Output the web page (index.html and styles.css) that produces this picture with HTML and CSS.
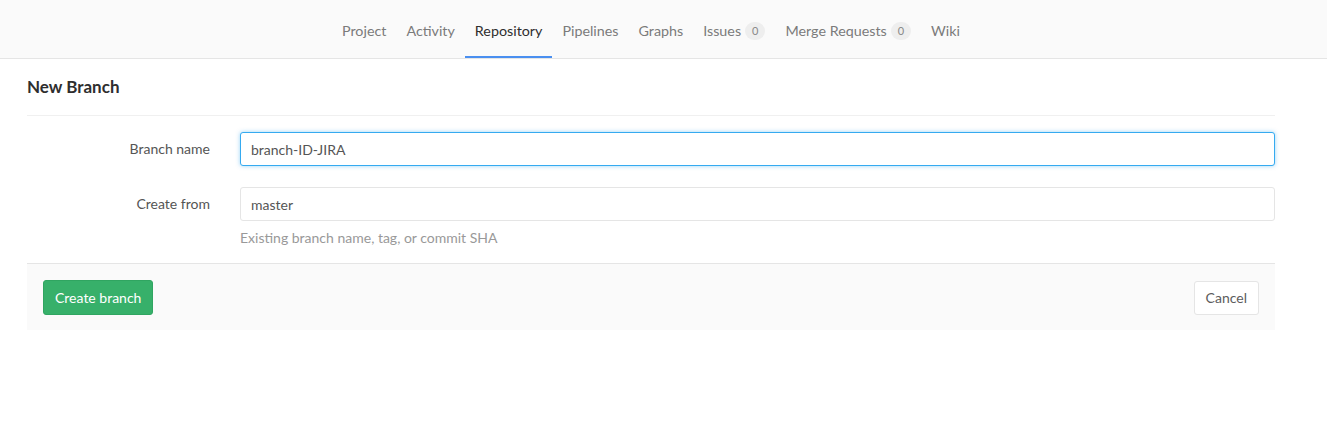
FILE: index.html
```html
<!DOCTYPE html>
<html>
<head>
<meta charset="utf-8">
<link rel="stylesheet" href="styles.css">
</head>
<body>
<nav class="nav">
  <ul class="tabs">
    <li class="tab">Project</li>
    <li class="tab">Activity</li>
    <li class="tab active">Repository</li>
    <li class="tab">Pipelines</li>
    <li class="tab">Graphs</li>
    <li class="tab">Issues <span class="badge">0</span></li>
    <li class="tab">Merge Requests <span class="badge">0</span></li>
    <li class="tab">Wiki</li>
  </ul>
</nav>
<main class="page">
  <h3 class="title">New Branch</h3>
  <form class="form">
    <div class="row">
      <label class="label">Branch name</label>
      <div class="field"><input class="input focus" type="text" value="branch-ID-JIRA"></div>
    </div>
    <div class="row row-last">
      <label class="label">Create from</label>
      <div class="field">
        <input class="input" type="text" value="master">
        <div class="help">Existing branch name, tag, or commit SHA</div>
      </div>
    </div>
    <div class="actions">
      <button type="button" class="btn btn-create">Create branch</button>
      <button type="button" class="btn btn-cancel">Cancel</button>
    </div>
  </form>
</main>
</body>
</html>
```
FILE: styles.css
```css
* { box-sizing: border-box; }
body {
  margin: 0;
  font-family: Lato, "Open Sans", "Liberation Sans", sans-serif;
  font-size: 14px;
  color: #2e2e2e;
  background: #fff;
}
.nav {
  background: #fafafa;
  border-bottom: 1px solid #e5e5e5;
  height: 59px;
  display: flex;
  justify-content: center;
  padding-right: 25px;
}
.tabs {
  list-style: none;
  margin: 0;
  padding: 0;
  display: flex;
}
.tab {
  padding: 21px 10px 15px;
  line-height: 20px;
  font-size: 14.3px;
  color: #7b7b7b;
  border-bottom: 2px solid transparent;
  display: flex;
  align-items: center;
  white-space: nowrap;
}
.tab.active {
  color: #2e2e2e;
  border-bottom-color: #4a8ff0;
}
.badge {
  display: inline-block;
  margin-left: 4px;
  background: #eee;
  color: #888;
  font-size: 11px;
  line-height: 18px;
  height: 18px;
  padding: 0 7px;
  border-radius: 9px;
}
.page {
  padding: 0 52px 0 27px;
}
.title {
  margin: 0;
  padding: 16px 0;
  font-size: 17px;
  line-height: 24px;
  font-weight: 700;
  color: #2e2e2e;
  border-bottom: 1px solid #f0f0f0;
}
.form {
  padding-top: 16px;
}
.row {
  display: grid;
  grid-template-columns: 183px 1fr;
  column-gap: 30px;
  margin-bottom: 21px;
}
.row-last { margin-bottom: 15px; }
.label {
  text-align: right;
  color: #555;
  line-height: 34px;
  height: 34px;
}
.input {
  display: block;
  width: 100%;
  height: 34px;
  padding: 0 10px;
  font: inherit;
  font-size: 14px;
  color: #555;
  border: 1px solid #e5e5e5;
  border-radius: 3px;
  background: #fff;
  outline: none;
}
.input.focus {
  border-color: #35aaf0;
  box-shadow: 0 0 4px rgba(53, 170, 240, 0.5);
}
.help {
  margin-top: 7px;
  line-height: 20px;
  color: #999;
}
.actions {
  display: flex;
  justify-content: space-between;
  align-items: center;
  background: #fafafa;
  border-top: 1px solid #e5e5e5;
  padding: 16px 16px 15px;
}
.btn {
  font: inherit;
  font-size: 14px;
  height: 35px;
  padding: 0 11px;
  border-radius: 3px;
  cursor: pointer;
}
.btn-create {
  background: #37b06a;
  border: 1px solid #30a561;
  color: #fff;
}
.btn-cancel {
  background: #fff;
  border: 1px solid #e5e5e5;
  color: #5c5c5c;
  height: 34px;
}
```
